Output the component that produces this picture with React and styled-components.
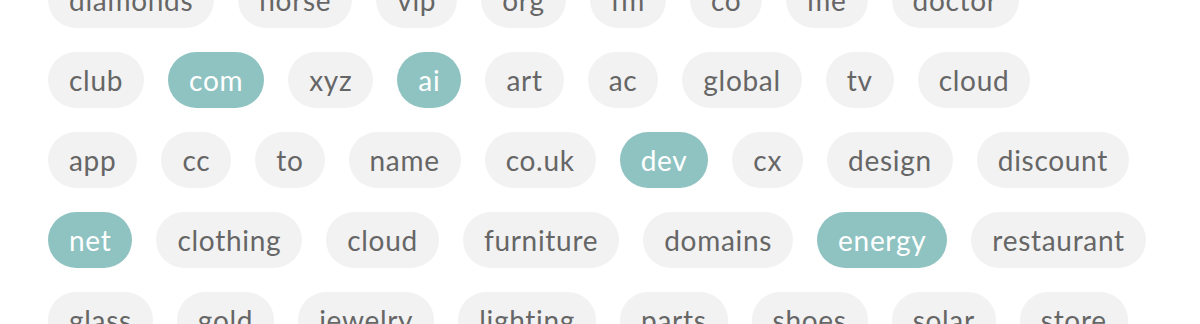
import React from "react";
import styled, { createGlobalStyle } from "styled-components";

const GlobalStyle = createGlobalStyle`
    html, body {
        margin: 0;
        padding: 0;
        background: #ffffff;
    }
    body {
        font-family: Lato, "Open Sans", sans-serif;
    }
`;

const rows = [
    ["diamonds", "horse", "vip", "org", "fm", "co", "me", "doctor"],
    ["club", "*com", "xyz", "*ai", "art", "ac", "global", "tv", "cloud"],
    ["app", "cc", "to", "name", "co.uk", "*dev", "cx", "design", "discount"],
    ["*net", "clothing", "cloud", "furniture", "domains", "*energy", "restaurant"],
    ["glass", "gold", "jewelry", "lighting", "parts", "shoes", "solar", "store"],
];

const App = () => {
    return (
        <>
            <GlobalStyle />
            <Page>
                <TagCloud>
                    {rows.map((row, i) => (
                        <TagRow key={i}>
                            {row.map((tag) => {
                                const active = tag.startsWith("*");
                                return (
                                    <Tag key={tag} $active={active}>
                                        {active ? tag.slice(1) : tag}
                                    </Tag>
                                );
                            })}
                        </TagRow>
                    ))}
                </TagCloud>
            </Page>
        </>
    );
};

const Page = styled.div`
    width: 1200px;
    height: 324px;
    overflow: hidden;
    background: #fff;
`;

const TagCloud = styled.div`
    display: flex;
    flex-direction: column;
    gap: 24px;
    margin-top: -28px;
    padding-left: 48px;
`;

const TagRow = styled.div`
    display: flex;
    gap: 24px;
`;

const Tag = styled.span`
    display: inline-flex;
    align-items: center;
    justify-content: center;
    height: 56px;
    padding: 0 21px;
    border-radius: 28px;
    box-sizing: border-box;
    background: ${(props) => (props.$active ? "#8ec3c2" : "#f2f2f2")};
    color: ${(props) => (props.$active ? "#ffffff" : "#666666")};
    font-size: 28px;
    letter-spacing: 0.7px;
    white-space: nowrap;
`;

export default App;
